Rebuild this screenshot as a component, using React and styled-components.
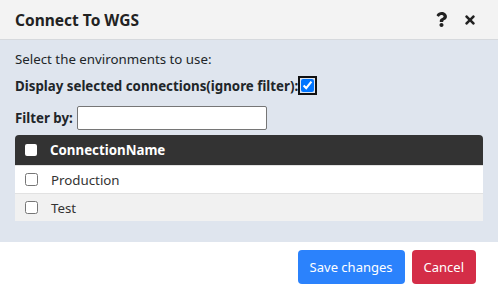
import React from 'react';
import styled, { createGlobalStyle } from 'styled-components';
import { FaQuestion, FaTimes } from 'react-icons/fa';

const GlobalStyle = createGlobalStyle`
  html, body {
    margin: 0;
    padding: 0;
    background: #ffffff;
  }
  body {
    font-family: 'Noto Sans', 'Open Sans', sans-serif;
    color: #212529;
  }
`;

const Dialog = styled.div`
  width: 498px;
  height: 291px;
  display: flex;
  flex-direction: column;
  background: #ffffff;
`;

const Header = styled.div`
  height: 39px;
  display: flex;
  align-items: center;
  justify-content: space-between;
  padding: 0 21px 0 15px;
  background: #f3f3f3;
  border-bottom: 1px solid #d6d9dd;
`;

const Title = styled.h1`
  margin: 0;
  font-size: 15.5px;
  font-weight: 700;
  color: #222;
  padding-top: 1px;
`;

const HeaderTools = styled.div`
  display: flex;
  align-items: center;
  gap: 14px;
  color: #222;
`;

const ToolIcon = styled.span`
  display: flex;
  align-items: center;
  font-size: ${(p) => p.size}px;
`;

const Body = styled.div`
  flex: 0 0 202px;
  box-sizing: border-box;
  padding: 9px 15px 0;
  background: #dfe5ee;
  font-size: 13.3px;
`;

const Line = styled.div`
  display: flex;
  align-items: center;
  height: ${(p) => p.h}px;
  font-weight: ${(p) => (p.bold ? 700 : 400)};
`;

const Check = styled.input.attrs({ type: 'checkbox' })`
  width: 13px;
  height: 13px;
  margin: 0;
  accent-color: #0075ff;
`;

const FocusCheck = styled(Check)`
  margin-left: 3px;
  outline: 2px solid #111;
  outline-offset: 1px;
  border-radius: 2px;
`;

const FilterInput = styled.input`
  box-sizing: border-box;
  margin-left: 4px;
  width: 190px;
  height: 24px;
  border: 1px solid #767676;
  border-radius: 2px;
  background: #fff;
`;

const Table = styled.div`
  margin-top: 1px;
  width: 468px;
`;

const HeadRow = styled.div`
  display: flex;
  align-items: center;
  height: 30px;
  padding-left: 10px;
  background: #333333;
  color: #ffffff;
  font-weight: 700;
  border-radius: 4px 4px 0 0;
`;

const HeadBox = styled.span`
  width: 12px;
  height: 12px;
  background: #fff;
  border-radius: 2px;
  margin-right: 13px;
`;

const Row = styled.div`
  display: flex;
  align-items: center;
  height: 27px;
  padding-left: 10px;
  background: ${(p) => (p.alt ? '#f1f1f1' : '#ffffff')};
  border-top: 1px solid #e2e2e2;
  color: #333;
`;

const RowCheck = styled(Check)`
  margin-right: 13px;
`;

const Footer = styled.div`
  flex: 1;
  display: flex;
  justify-content: flex-end;
  align-items: flex-start;
  gap: 7px;
  padding: 8px 22px 0 0;
`;

const Button = styled.button`
  height: 34px;
  padding: 0 12px;
  border: none;
  border-radius: 4px;
  font-family: inherit;
  font-size: 13px;
  color: #fff;
  background: ${(p) => (p.danger ? '#d42d47' : '#2b82fc')};
`;

const rows = ['Production', 'Test'];

export default function App() {
  return (
    <Dialog>
      <GlobalStyle />
      <Header>
        <Title>Connect To WGS</Title>
        <HeaderTools>
          <ToolIcon size={15}>
            <FaQuestion />
          </ToolIcon>
          <ToolIcon size={14}>
            <FaTimes />
          </ToolIcon>
        </HeaderTools>
      </Header>
      <Body>
        <Line h={20}>Select the environments to use:</Line>
        <Line h={33} bold>
          Display selected connections(ignore filter):
          <FocusCheck defaultChecked />
        </Line>
        <Line h={32} bold>
          Filter by:
          <FilterInput />
        </Line>
        <Table>
          <HeadRow>
            <HeadBox />
            ConnectionName
          </HeadRow>
          {rows.map((name, i) => (
            <Row key={name} alt={i % 2 === 1}>
              <RowCheck />
              {name}
            </Row>
          ))}
        </Table>
      </Body>
      <Footer>
        <Button>Save changes</Button>
        <Button danger>Cancel</Button>
      </Footer>
    </Dialog>
  );
}
